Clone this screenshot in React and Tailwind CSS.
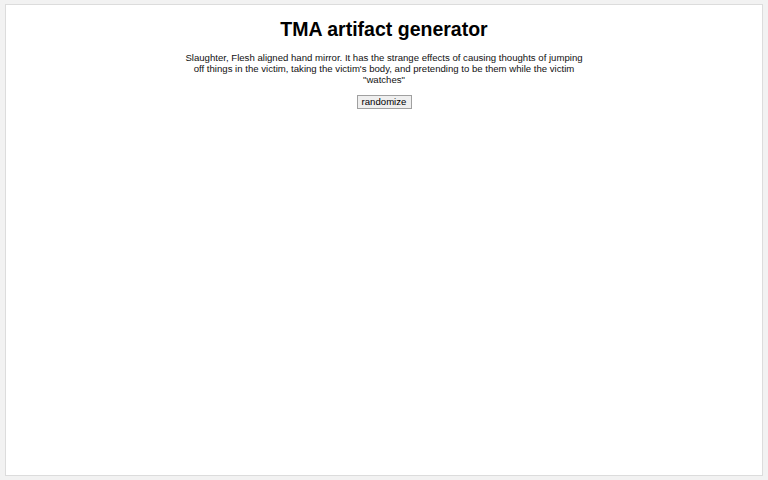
import React, { useState } from "react";

const artifacts = [
  "Slaughter, Flesh aligned hand mirror. It has the strange effects of causing thoughts of jumping off things in the victim, taking the victim's body, and pretending to be them while the victim \"watches\"",
  "Spiral, Web aligned music box. It has the strange effects of causing the victim to forget their own name, and hearing footsteps behind them that never arrive",
  "Buried, Dark aligned pocket watch. It has the strange effects of causing shortness of breath in the victim, and the feeling of walls closing in",
];

export default function App() {
  const [idx, setIdx] = useState(0);

  const randomize = () => {
    setIdx(Math.floor(Math.random() * artifacts.length));
  };

  return (
    <div className="min-h-screen bg-[#f2f2f2] pt-[4px] pl-[5px] font-['Liberation_Sans',Arial,sans-serif] text-black">
      <div className="w-[758px] h-[472px] border border-[#dcdcdc] bg-white flex flex-col items-center">
        <h1 className="mt-[12px] text-[19.5px] font-bold leading-[24px]">
          TMA artifact generator
        </h1>
        <p className="mt-[11px] w-[400px] text-center text-[9.6px] leading-[11px] text-[#111]">
          {artifacts[idx]}
        </p>
        <button
          onClick={randomize}
          className="mt-[10px] h-[14px] w-[55px] border border-[#a0a0a0] bg-[#efefef] text-[9.6px] leading-[12px]"
        >
          randomize
        </button>
      </div>
    </div>
  );
}
